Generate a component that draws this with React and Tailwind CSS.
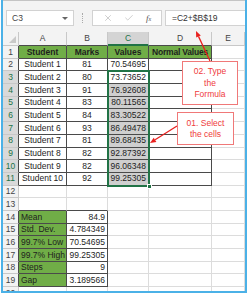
import { X, Check } from 'lucide-react';

// sheet data, row 0 is the column header row
const students = [81, 80, 91, 83, 84, 93, 81, 82, 82, 92];
const values = [
  '70.54695', '73.73652', '76.92608', '80.11565', '83.30522',
  '86.49478', '89.68435', '92.87392', '96.06348', '99.25305',
];
const stats = [
  ['Mean', '84.9'],
  ['Std. Dev.', '4.784349'],
  ['99.7% Low', '70.54695'],
  ['99.7% High', '99.25305'],
  ['Steps', '9'],
  ['Gap', '3.189566'],
];

const inTable = (r, c) =>
  (r >= 1 && r <= 11 && c >= 1 && c <= 4) || (r >= 14 && r <= 19 && c >= 1 && c <= 2);

const cellText = (r, c) => {
  if (r === 1) return ['', 'Student', 'Marks', 'Values', 'Normal Values', ''][c];
  if (r >= 2 && r <= 11) {
    const i = r - 2;
    if (c === 1) return `Student ${i + 1}`;
    if (c === 2) return String(students[i]);
    if (c === 3) return values[i];
  }
  if (r >= 14 && r <= 19) {
    const s = stats[r - 14];
    if (c === 1) return s[0];
    if (c === 2) return s[1];
  }
  return '';
};

const Cell = ({ r, c }) => {
  const place = { gridRow: r + 1, gridColumn: c + 1 };
  const head = r === 0 || c === 0;
  const rightBorder = inTable(r, c) || inTable(r, c + 1)
    ? 'border-r-[#4a4a4a]'
    : head ? 'border-r-[#c8c8c8]' : 'border-r-[#dcdcdc]';
  const bottomBorder = inTable(r, c) || inTable(r + 1, c)
    ? 'border-b-[#4a4a4a]'
    : head ? 'border-b-[#c8c8c8]' : 'border-b-[#dcdcdc]';

  let fill = 'bg-white';
  let text = 'text-[#1e1e1e]';
  let align = 'justify-start';
  let weight = '';

  if (r === 0) {
    if (c === 3) {
      return (
        <div style={place} className="flex items-center justify-center bg-[#d4d4d4] border-r border-r-[#c8c8c8] border-b-2 border-b-[#217346] text-[#217346]">
          C
        </div>
      );
    }
    if (c === 0) {
      return (
        <div style={place} className="flex items-end justify-end bg-[#f3f3f3] border-r border-b border-r-[#c8c8c8] border-b-[#c8c8c8] p-[2px]">
          <svg width="7" height="7"><polygon points="7,0 7,7 0,7" fill="#c9c9c9" /></svg>
        </div>
      );
    }
    fill = 'bg-[#f3f3f3]';
    text = 'text-[#444]';
    align = 'justify-center';
  } else if (c === 0) {
    const sel = r >= 3 && r <= 11;
    fill = sel ? 'bg-[#d9d9d9]' : 'bg-[#f3f3f3]';
    text = sel ? 'text-[#217346]' : 'text-[#444]';
    align = 'justify-center';
  } else {
    if (r === 1 && c <= 4) {
      fill = 'bg-[#70ad47]';
      weight = c === 4 ? 'font-bold tracking-[-0.2px]' : 'font-bold';
      align = 'justify-center';
    } else if (r >= 14 && r <= 19 && c === 1) {
      fill = 'bg-[#70ad47]';
    } else if (r >= 4 && r <= 11 && c === 3) {
      fill = 'bg-[#cfcfcf]';
    }
    if (r >= 2 && r <= 11 && (c === 1 || c === 2)) align = 'justify-center';
    if (r >= 2 && r <= 11 && c === 3) align = 'justify-end';
    if (r >= 14 && r <= 19 && c === 2) align = 'justify-end';
  }

  return (
    <div style={place} className={`flex items-center overflow-hidden whitespace-nowrap px-[2px] border-r border-b ${rightBorder} ${bottomBorder} ${fill} ${text} ${align} ${weight}`}>
      {c === 0 ? (r === 0 ? '' : r) : r === 0 ? ['', 'A', 'B', 'C', 'D', 'E'][c] : cellText(r, c)}
    </div>
  );
};

const App = () => {
  const rows = Array.from({ length: 21 }, (_, r) => r);
  const cols = [0, 1, 2, 3, 4, 5];

  return (
    <div className="w-[252px] h-[300px] bg-white font-['Liberation_Sans',Arial,sans-serif] text-[8.5px] leading-none">
      <div className="relative ml-[1px] w-[246px] h-[293px] border-x-2 border-b-2 border-[#4bb1e7] overflow-hidden">
        {/* formula bar */}
        <div className="h-[32px] bg-[#f3f3f3] border-t border-[#c4c4c4] pt-[9px] flex items-start">
          <div className="ml-[3px] w-[68px] h-[16px] bg-white border border-[#d2d2d2] flex items-center justify-between pl-[5px] pr-[5px] text-[#444]">
            <span>C3</span>
            <span className="w-0 h-0 border-l-[3px] border-r-[3px] border-t-[3px] border-l-transparent border-r-transparent border-t-[#666]" />
          </div>
          <div className="ml-[8px] mt-[3px] h-[10px] border-l border-dotted border-[#aaa]" />
          <div className="ml-[9px] w-[70px] h-[16px] bg-white border border-[#d2d2d2] flex items-center justify-around px-[4px]">
            <X size={10} strokeWidth={1.5} color="#b0b0b0" />
            <Check size={10} strokeWidth={1.5} color="#b0b0b0" />
            <span className="font-['Liberation_Serif',serif] italic text-[#555] text-[9px]">
              f<span className="text-[6px]">x</span>
            </span>
          </div>
          <div className="ml-[3px] flex-1 h-[16px] bg-white border border-r-0 border-[#d2d2d2] flex items-center pl-[6px] text-[#333]">
            =C2+$B$19
          </div>
        </div>

        {/* sheet grid */}
        <div className="grid grid-cols-[16px_48px_41px_41px_63px_33px] grid-rows-[14px_repeat(20,12.7px)]">
          {rows.map((r) => cols.map((c) => <Cell key={`${r}-${c}`} r={r} c={c} />))}
          <div className="relative col-[4/5] row-[4/13] -ml-px -mt-px -mb-px -mr-px border-2 border-[#217346] pointer-events-none">
            <div className="absolute -right-[4px] -bottom-[4px] w-[5px] h-[5px] bg-[#217346] border border-white" />
          </div>
        </div>

        {/* callouts */}
        <svg className="absolute inset-0 pointer-events-none" width="242" height="291">
          <line x1="207" y1="61" x2="195.5" y2="36.4" stroke="#e8201e" strokeWidth="1.3" />
          <polygon points="193,31 197.8,35.4 193.2,37.5" fill="#e8201e" />
          <line x1="174" y1="126" x2="152.1" y2="139.8" stroke="#e8201e" strokeWidth="1.3" />
          <polygon points="147,143 153.4,141.9 150.7,137.7" fill="#e8201e" />
        </svg>
        <div className="absolute left-[179px] top-[61px] w-[56px] h-[44px] bg-white border-[1.5px] border-[#f07878] flex flex-col items-center justify-center gap-[3px] text-[#ef3b3b] text-[8.5px]">
          <span>02. Type</span>
          <span>the</span>
          <span>Formula</span>
        </div>
        <div className="absolute left-[174px] top-[112px] w-[57px] h-[33px] bg-white border-[1.5px] border-[#f07878] flex flex-col items-center justify-center gap-[3px] text-[#ef3b3b] text-[8.5px]">
          <span>01. Select</span>
          <span>the cells</span>
        </div>
      </div>
    </div>
  );
};

export default App;
